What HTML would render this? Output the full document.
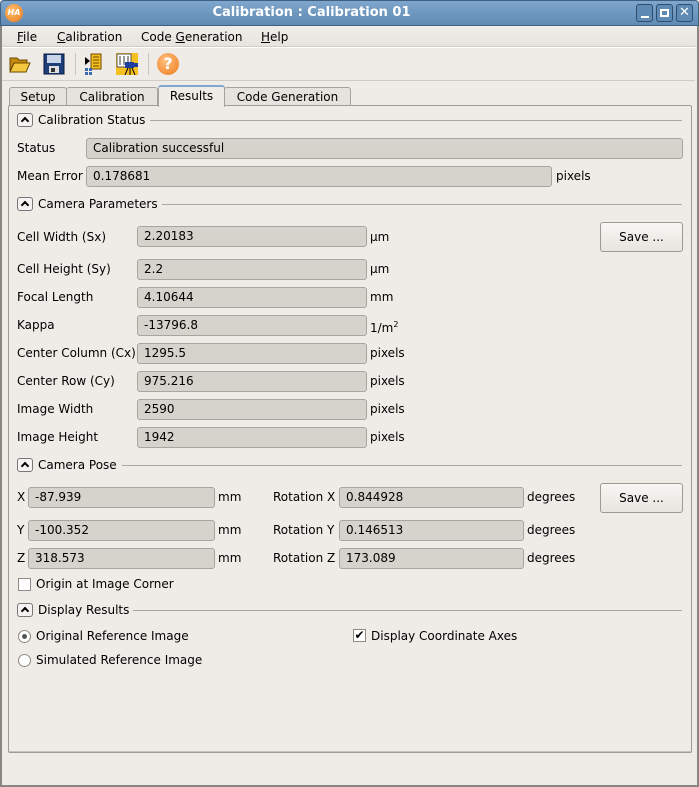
<!DOCTYPE html><html><head><meta charset="utf-8"><style>
*{box-sizing:border-box;margin:0;padding:0}
body{width:699px;height:787px;background:#efebe7;font-family:"DejaVu Sans","Liberation Sans",sans-serif;font-size:12px;color:#000;position:relative;overflow:hidden}
.a{position:absolute;white-space:nowrap}
.t{position:absolute;white-space:nowrap;line-height:14px}
.f{position:absolute;height:21px;background:#d6d2cc;border:1px solid #a8a49f;border-radius:3px;padding-left:6px;line-height:19px}
.btn{position:absolute;width:83px;height:30px;border:1px solid #9d9993;border-radius:3px;background:linear-gradient(#f8f6f4,#e8e4df);text-align:center;line-height:28px}
.hb{position:absolute;width:16px;height:14px;border:1px solid #777;border-radius:3px;background:#f6f4f2}
.hb:after{content:"";position:absolute;left:4px;top:4px;width:4px;height:4px;border-left:2px solid #000;border-top:2px solid #000;transform:rotate(45deg)}
.hl{position:absolute;height:1px;background:#aaa6a1}
.u{text-decoration:underline}
</style></head><body>
<div class="a" style="left:0;top:0;width:699px;height:26px;background:linear-gradient(#7fa6cc,#5f8ab4);border:1px solid #3f5f80;border-radius:4px 4px 0 0"></div>
<div class="a" style="left:5px;top:4px;width:18px;height:18px;border-radius:50%;background:radial-gradient(circle at 40% 35%,#ffc070,#e8781a);color:#fff;font-size:8px;font-weight:bold;text-align:center;line-height:18px;font-style:italic">HA</div>
<div class="a" style="left:-38px;width:699px;top:5px;text-align:center;color:#fff;font-weight:bold;font-size:13px">Calibration : Calibration 01</div>
<div class="a" style="left:636px;top:4px;width:17px;height:18px;border:1px solid #2f4d6c;border-radius:3px;background:#5f8ab4"><div class="a" style="left:4px;top:11px;width:8px;height:2px;background:#fff"></div></div>
<div class="a" style="left:656px;top:4px;width:17px;height:18px;border:1px solid #2f4d6c;border-radius:3px;background:#5f8ab4"><div class="a" style="left:3px;top:4px;width:9px;height:8px;border:2px solid #fff"></div></div>
<div class="a" style="left:676px;top:4px;width:17px;height:18px;border:1px solid #2f4d6c;border-radius:3px;background:#5f8ab4;color:#fff;font-weight:bold;text-align:center;line-height:16px;font-size:13px">✕</div>
<div class="a" style="left:0;top:26px;width:2px;height:761px;background:#8a8783"></div>
<div class="a" style="left:697px;top:26px;width:2px;height:761px;background:#8a8783"></div>
<div class="a" style="left:0;top:785px;width:699px;height:2px;background:#8a8783"></div>
<div class="a" style="left:2px;top:26px;width:695px;height:21px;background:linear-gradient(#f1eeea,#e6e2dd)"></div>
<div class="t" style="left:17px;top:30px"><span class="u">F</span>ile</div>
<div class="t" style="left:57px;top:30px"><span class="u">C</span>alibration</div>
<div class="t" style="left:141px;top:30px">Code <span class="u">G</span>eneration</div>
<div class="t" style="left:261px;top:30px"><span class="u">H</span>elp</div>
<div class="hl" style="left:2px;top:46px;width:693px;background:#d0ccc6"></div>
<div class="hl" style="left:2px;top:47px;width:693px;background:#fff"></div>
<svg class="a" style="left:9px;top:54px" width="22" height="20"><path d="M1 4h7l2 2h8v3H5L1 17z" fill="#c58a10" stroke="#6b4a00"/><path d="M5 9h16l-4 9H1z" fill="#f5c842" stroke="#6b4a00"/></svg>
<svg class="a" style="left:43px;top:53px" width="22" height="22"><rect x="1" y="1" width="20" height="20" fill="#1f3f78" stroke="#0a1a40"/><rect x="4" y="2" width="14" height="8" fill="#c8d4e8"/><rect x="6" y="13" width="10" height="7" fill="#e0e0e0"/><rect x="8" y="15" width="4" height="4" fill="#333"/></svg>
<div class="a" style="left:75px;top:53px;width:1px;height:22px;background:#c8c4bf"></div>
<svg class="a" style="left:83px;top:53px" width="22" height="22"><rect x="8" y="1" width="10" height="15" fill="#f5c020" stroke="#6b4a00"/><path d="M10 4h6M10 7h6M10 10h6M10 13h6" stroke="#6b4a00"/><path d="M2 4l5 4-5 4z" fill="#000"/><rect x="2" y="15" width="3" height="3" fill="#3a6ab0"/><rect x="6" y="15" width="3" height="3" fill="#3a6ab0"/><rect x="2" y="19" width="3" height="3" fill="#3a6ab0"/><rect x="6" y="19" width="3" height="3" fill="#3a6ab0"/></svg>
<svg class="a" style="left:116px;top:53px" width="22" height="22"><rect x="0" y="0" width="22" height="22" fill="#f5c020"/><rect x="1" y="1" width="14" height="13" fill="#fff" stroke="#555"/><path d="M4 3v9M8 3v9M12 3v9" stroke="#333"/><rect x="9" y="9" width="9" height="6" fill="#1f3fa0"/><rect x="18" y="10" width="4" height="4" fill="#1f3fa0"/><path d="M12 15l-3 7M14 15v7M16 15l3 7" stroke="#000"/></svg>
<div class="a" style="left:148px;top:53px;width:1px;height:22px;background:#c8c4bf"></div>
<div class="a" style="left:157px;top:53px;width:22px;height:22px;border-radius:50%;background:radial-gradient(circle at 40% 35%,#ffc080,#ee7a1a);color:#fff;font-weight:bold;font-size:16px;text-align:center;line-height:22px">?</div>
<div class="hl" style="left:2px;top:80px;width:693px;background:#cfcbc6"></div>
<div class="a" style="left:9px;top:87px;width:58px;height:19px;border:1px solid #a6a29d;border-bottom:none;border-radius:3px 3px 0 0;background:#e6e2dd;text-align:center;line-height:18px">Setup</div>
<div class="a" style="left:66px;top:87px;width:92px;height:19px;border:1px solid #a6a29d;border-bottom:none;border-radius:3px 3px 0 0;background:#e6e2dd;text-align:center;line-height:18px">Calibration</div>
<div class="a" style="left:224px;top:87px;width:127px;height:19px;border:1px solid #a6a29d;border-bottom:none;border-radius:3px 3px 0 0;background:#e6e2dd;text-align:center;line-height:18px">Code Generation</div>
<div class="a" style="left:8px;top:105px;width:684px;height:648px;border:1px solid #9f9b96;border-radius:2px;box-shadow:inset 0 -1px 0 #c8c4bf"></div>
<div class="a" style="left:158px;top:85px;width:67px;height:22px;border:1px solid #a6a29d;border-top:2px solid #7fa6cc;border-bottom:none;border-radius:3px 3px 0 0;background:#efebe7;text-align:center;line-height:18px">Results</div>

<div class="hb" style="left:17px;top:113px"></div><div class="t" style="left:38px;top:113px">Calibration Status</div><div class="hl" style="left:150px;top:120px;width:532px"></div>
<div class="t" style="left:17px;top:141px">Status</div><div class="f" style="left:86px;top:138px;width:597px">Calibration successful</div>
<div class="t" style="left:17px;top:169px">Mean Error</div><div class="f" style="left:86px;top:166px;width:466px">0.178681</div><div class="t" style="left:556px;top:169px">pixels</div>

<div class="hb" style="left:17px;top:197px"></div><div class="t" style="left:38px;top:197px">Camera Parameters</div><div class="hl" style="left:162px;top:204px;width:520px"></div>
<div class="t" style="left:17px;top:230px">Cell Width (Sx)</div><div class="f" style="left:137px;top:226px;width:230px">2.20183</div><div class="t" style="left:370px;top:230px">µm</div>
<div class="btn" style="left:600px;top:222px">Save ...</div>
<div class="t" style="left:17px;top:262px">Cell Height (Sy)</div><div class="f" style="left:137px;top:259px;width:230px">2.2</div><div class="t" style="left:370px;top:262px">µm</div>
<div class="t" style="left:17px;top:290px">Focal Length</div><div class="f" style="left:137px;top:287px;width:230px">4.10644</div><div class="t" style="left:370px;top:290px">mm</div>
<div class="t" style="left:17px;top:318px">Kappa</div><div class="f" style="left:137px;top:315px;width:230px">-13796.8</div><div class="t" style="left:370px;top:318px">1/m<sup style="font-size:8px;vertical-align:5px">2</sup></div>
<div class="t" style="left:17px;top:346px">Center Column (Cx)</div><div class="f" style="left:137px;top:343px;width:230px">1295.5</div><div class="t" style="left:370px;top:346px">pixels</div>
<div class="t" style="left:17px;top:374px">Center Row (Cy)</div><div class="f" style="left:137px;top:371px;width:230px">975.216</div><div class="t" style="left:370px;top:374px">pixels</div>
<div class="t" style="left:17px;top:402px">Image Width</div><div class="f" style="left:137px;top:399px;width:230px">2590</div><div class="t" style="left:370px;top:402px">pixels</div>
<div class="t" style="left:17px;top:430px">Image Height</div><div class="f" style="left:137px;top:427px;width:230px">1942</div><div class="t" style="left:370px;top:430px">pixels</div>

<div class="hb" style="left:17px;top:458px"></div><div class="t" style="left:38px;top:458px">Camera Pose</div><div class="hl" style="left:122px;top:465px;width:560px"></div>
<div class="t" style="left:17px;top:490px">X</div><div class="f" style="left:28px;top:487px;width:187px">-87.939</div><div class="t" style="left:218px;top:490px">mm</div>
<div class="t" style="left:273px;top:490px">Rotation X</div><div class="f" style="left:339px;top:487px;width:185px">0.844928</div><div class="t" style="left:527px;top:490px">degrees</div>
<div class="btn" style="left:600px;top:483px">Save ...</div>
<div class="t" style="left:17px;top:523px">Y</div><div class="f" style="left:28px;top:520px;width:187px">-100.352</div><div class="t" style="left:218px;top:523px">mm</div>
<div class="t" style="left:273px;top:523px">Rotation Y</div><div class="f" style="left:339px;top:520px;width:185px">0.146513</div><div class="t" style="left:527px;top:523px">degrees</div>
<div class="t" style="left:17px;top:551px">Z</div><div class="f" style="left:28px;top:548px;width:187px">318.573</div><div class="t" style="left:218px;top:551px">mm</div>
<div class="t" style="left:273px;top:551px">Rotation Z</div><div class="f" style="left:339px;top:548px;width:185px">173.089</div><div class="t" style="left:527px;top:551px">degrees</div>
<div class="a" style="left:18px;top:578px;width:13px;height:13px;border:1px solid #8e8a85;background:#fff"></div><div class="t" style="left:36px;top:577px">Origin at Image Corner</div>

<div class="hb" style="left:17px;top:603px"></div><div class="t" style="left:38px;top:603px">Display Results</div><div class="hl" style="left:133px;top:610px;width:549px"></div>
<div class="a" style="left:18px;top:630px;width:13px;height:13px;border:1px solid #8e8a85;border-radius:50%;background:#fff"><div class="a" style="left:3px;top:3px;width:5px;height:5px;border-radius:50%;background:#555"></div></div><div class="t" style="left:36px;top:629px">Original Reference Image</div>
<div class="a" style="left:18px;top:654px;width:13px;height:13px;border:1px solid #8e8a85;border-radius:50%;background:#fff"></div><div class="t" style="left:36px;top:653px">Simulated Reference Image</div>
<div class="a" style="left:353px;top:629px;width:13px;height:13px;border:1px solid #8e8a85;background:#fff;font-size:12px;line-height:11px;text-align:center;font-weight:bold">✔</div><div class="t" style="left:371px;top:629px">Display Coordinate Axes</div>
</body></html>
